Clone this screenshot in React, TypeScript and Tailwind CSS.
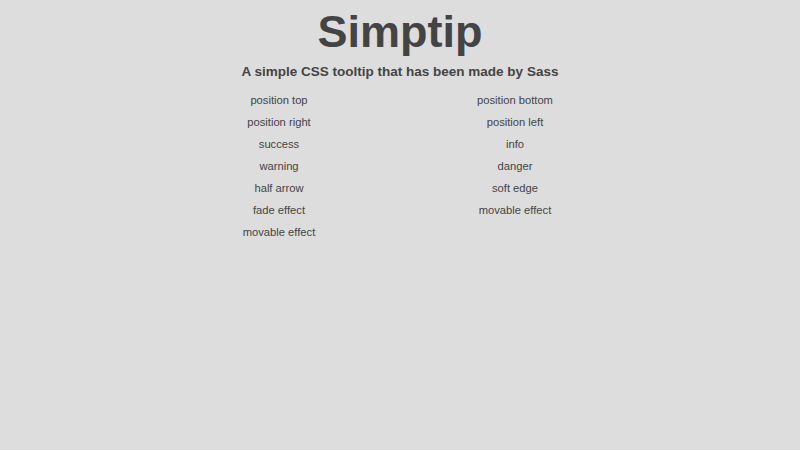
const left = ['position top', 'position right', 'success', 'warning', 'half arrow', 'fade effect', 'movable effect'];
const right = ['position bottom', 'position left', 'info', 'danger', 'soft edge', 'movable effect'];

function Column({ items }: { items: string[] }) {
  return (
    <ul className="w-[236px] flex flex-col items-center">
      {items.map((label, i) => (
        <li key={i} className="h-[22px] leading-[22px] text-[11.2px]">
          <a href="#" className="text-[#444]">{label}</a>
        </li>
      ))}
    </ul>
  );
}

export default function App() {
  return (
    <div className="min-h-[450px] w-full bg-[#dddddd] text-[#444] font-['Liberation_Sans',Arial,sans-serif]">
      <header className="text-center pt-[9px]">
        <h1 className="text-[45px] leading-none font-bold">Simptip</h1>
        <h2 className="mt-[8px] text-[13.5px] leading-[20px] font-bold">A simple CSS tooltip that has been made by Sass</h2>
      </header>
      <div className="mt-[7px] flex justify-center pr-[6px]">
        <Column items={left} />
        <Column items={right} />
      </div>
    </div>
  );
}
